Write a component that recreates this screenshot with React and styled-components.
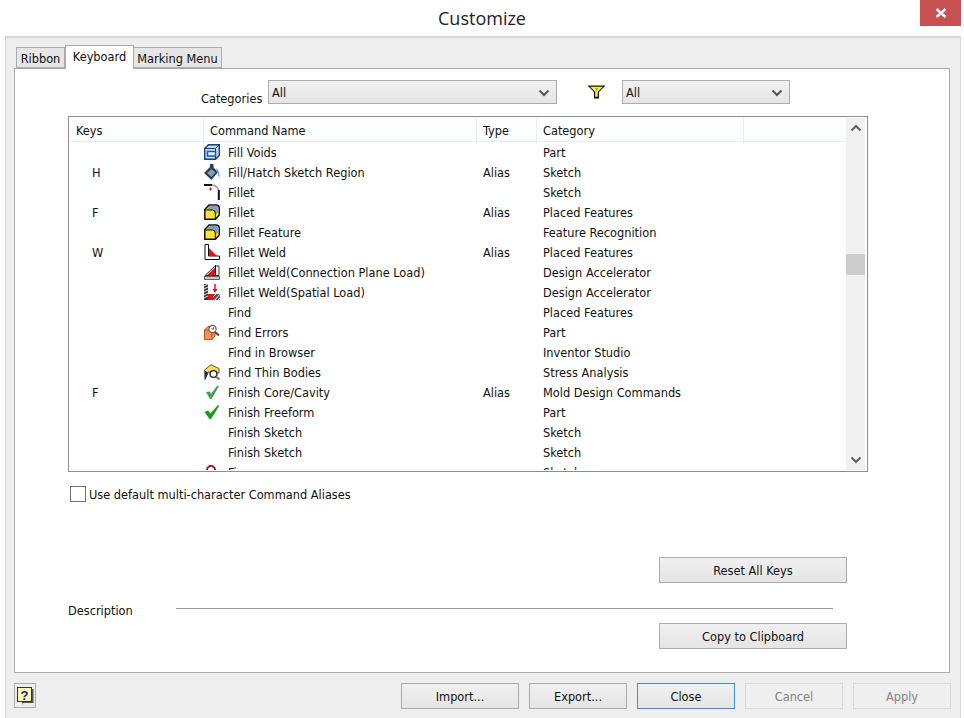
import React from 'react';
import styled, { createGlobalStyle } from 'styled-components';

const Global = createGlobalStyle`
  html, body { margin: 0; padding: 0; background: #fff; }
  body { font-family: "DejaVu Sans Condensed", "DejaVu Sans", sans-serif; font-stretch: condensed; font-size: 12.65px; color: #111; }
  * { box-sizing: border-box; }
`;

const Page = styled.div`
  width: 964px;
  height: 718px;
  overflow: hidden;
  display: flex;
  flex-direction: column;
`;

const TitleBar = styled.div`
  height: 36px;
  display: grid;
  grid-template-columns: 1fr auto 1fr;
  align-items: start;
`;

const Title = styled.div`
  grid-column: 2;
  font-family: "Open Sans", sans-serif;
  font-stretch: normal;
  font-size: 18px;
  line-height: 36px;
  color: #222;
`;

const CloseX = styled.div`
  grid-column: 3;
  justify-self: end;
  width: 41px;
  height: 26px;
  margin-right: 3px;
  background: #c75050;
  display: flex;
  align-items: center;
  justify-content: center;
`;

const Panel = styled.div`
  flex: 1;
  margin-left: 5px;
  width: 956px;
  background: #eeeeee;
  border: 2px solid #d6d6d6;
  border-width: 2px 1px 0 1px;
  padding: 6px 10px 0 8px;
`;

const Tabs = styled.div`
  display: flex;
  align-items: flex-end;
  height: 25px;
  margin-left: 2px;
  margin-bottom: -1px;
  position: relative;
  z-index: 1;
`;

const Tab = styled.div`
  height: ${p => (p.$active ? '24px' : '21px')};
  width: ${p => p.$w}px;
  margin-bottom: ${p => (p.$active ? '0' : '1px')};
  padding-top: 3px;
  text-align: center;
  line-height: 16px;
  white-space: nowrap;
  background: ${p => (p.$active ? '#fff' : '#e6e6e6')};
  border: 1px solid #acacac;
  border-bottom: ${p => (p.$active ? 'none' : '1px solid #acacac')};
  border-left: ${p => (p.$first || p.$active ? '1px solid #acacac' : 'none')};
  border-right: 1px solid #acacac;
`;

const Content = styled.div`
  width: 936px;
  height: 605px;
  background: #fff;
  border: 1px solid #acacac;
  padding: 11px 0 0 53px;
`;

const FilterRow = styled.div`
  display: flex;
  align-items: flex-start;
  height: 24px;
  padding-left: 133px;
`;

const FilterLabel = styled.span`
  line-height: 16px;
  margin-top: 11px;
  width: 67px;
`;

const SelectBox = styled.div`
  width: ${p => p.$w}px;
  height: 24px;
  padding: 1px 6px 0 3px;
  display: flex;
  align-items: center;
  justify-content: space-between;
  border: 1px solid #acacac;
  background: linear-gradient(#f0f0f0, #e5e5e5);
`;

const FunnelSlot = styled.div`
  width: 65px;
  height: 24px;
  padding: 5px 0 0 30px;
`;

const ListFrame = styled.div`
  margin-top: 12px;
  width: 800px;
  height: 356px;
  border: 1px solid #8c8c94;
  padding: 1px;
  display: flex;
  overflow: hidden;
`;

const ListBody = styled.div`
  width: 776px;
  overflow: hidden;
`;

const Columns = styled.div`
  display: grid;
  grid-template-columns: 134px 273px 60px 1fr;
`;

const Head = styled(Columns)`
  grid-template-columns: 134px 273px 60px 207px 1fr;
  height: 24px;
  background: #fcfdfe;
  border-bottom: 1px solid #e8f0f8;
`;

const HeadCell = styled.div`
  padding-left: 6px;
  line-height: 26px;
  border-right: 1px solid #e6edf5;
`;

const Row = styled(Columns)`
  height: 20px;
  line-height: 22px;
  white-space: nowrap;
`;

const KeyCell = styled.div`
  padding-left: 22px;
`;

const NameCell = styled.div`
  display: flex;
  align-items: flex-start;
  gap: 8px;
`;

const IconSlot = styled.span`
  width: 16px;
  height: 16px;
  margin-top: 2px;
  display: block;
  flex: none;
  & svg { display: block; }
`;

const TextCell = styled.div`
  padding-left: 6px;
`;

const ScrollBar = styled.div`
  width: 19px;
  background: #f0f0f0;
  display: flex;
  flex-direction: column;
  align-items: center;
`;

const ArrowBox = styled.div`
  height: 20px;
  width: 100%;
  display: flex;
  align-items: center;
  justify-content: center;
`;

const Thumb = styled.div`
  width: 100%;
  height: 21px;
  margin-top: 116px;
  background: #cdcdcd;
`;

const Grow = styled.div`
  flex: 1;
`;

const CheckRow = styled.label`
  display: flex;
  align-items: center;
  gap: 3px;
  margin: 14px 0 0 2px;
  height: 16px;
`;

const CheckBox = styled.span`
  width: 16px;
  height: 16px;
  background: #fff;
  border: 1px solid #707070;
`;

const Button = styled.div`
  width: ${p => p.$w || 98}px;
  height: 26px;
  text-align: center;
  line-height: 25px;
  color: ${p => (p.$off ? '#838383' : '#111')};
  background: ${p => (p.$off ? '#efefef' : 'linear-gradient(#f0f0f0, #e5e5e5)')};
  border: 1px solid ${p => (p.$off ? '#d9d9d9' : p.$focus ? '#3c8fe0' : '#acacac')};
`;

const SideButton = styled(Button)`
  margin: ${p => p.$top}px 0 0 591px;
`;

const DescRow = styled.div`
  display: flex;
  margin-top: 19px;
  height: 21px;
`;

const DescLabel = styled.span`
  width: 108px;
  margin-top: 1px;
  line-height: 16px;
`;

const DescLine = styled.div`
  width: 657px;
  height: 1px;
  background: #9a9a9a;
  margin-top: 6px;
`;

const Footer = styled.div`
  display: flex;
  width: 937px;
  margin-top: 10px;
  gap: 10px;
  align-items: flex-start;
`;

const HelpButton = styled.div`
  width: 22px;
  height: 25px;
  margin-right: 355px;
  border: 1px solid #acacac;
  padding: 3px 0 0 2px;
`;

const Chevron = ({ up, dark }) => (
  <svg width="12" height="8" viewBox="0 0 12 8">
    <path d={up ? 'M1.5 6.5 L6 2 L10.5 6.5' : 'M1.5 1.5 L6 6 L10.5 1.5'} fill="none" stroke={dark ? '#5f5f5f' : '#555'} strokeWidth="2" />
  </svg>
);

const Svg = ({ children }) => <svg width="16" height="16" viewBox="0 0 16 16">{children}</svg>;

const icons = {
  voids: (
    <Svg>
      <path d="M.7 4.5 L4.5 .7 H15.3 V11.5 L11.5 15.3 H.7 Z" fill="#c6d9ee" stroke="#173f78" strokeWidth="1.4" />
      <path d="M.7 4.5 H11.5 V15.3 M11.5 4.5 L15.3 .7" fill="none" stroke="#173f78" />
      <rect x="3.5" y="7.5" width="8" height="4.5" fill="#e9f1fa" stroke="#1f5aa8" strokeWidth="1.5" />
    </Svg>
  ),
  hatch: (
    <Svg>
      <path d="M0 9 L7.5 1.5 L14 8 L7.5 16 Z" fill="#1f3f6b" />
      <path d="M3 9 L7.5 5 L11.5 8.5 L7.5 13 Z" fill="#8e9ba6" />
      <path d="M6 0 H9.5 V5 H6 Z" fill="#3c3c3c" />
      <path d="M12 4 Q16 6.5 15.5 14 L13 8.5 Z" fill="#6aa6dc" />
    </Svg>
  ),
  arc: (
    <Svg>
      <path d="M0 1 H8" stroke="#111" strokeWidth="2" />
      <path d="M8 1 Q14 2 14.8 7" fill="none" stroke="#9a9a9a" strokeWidth="1.5" />
      <path d="M14.8 6 V16" stroke="#111" strokeWidth="2" />
      <path d="M5 5 H8 M6.5 3.5 V6.5" stroke="#e01010" strokeWidth="1" />
    </Svg>
  ),
  cube: (
    <Svg>
      <path d="M.8 5.5 L5 1 H12 Q15.3 1 15.3 4 V11 L11.5 15.2 H.8 Z" fill="#ffe23a" stroke="#111" strokeWidth="1.5" />
      <path d="M5.5 1.8 H12 Q14.6 2 14.6 5 V8 L11.5 11 V8 Q11 6 8.5 6 H2.5 Z" fill="#7f9fc4" />
      <path d="M.8 6 H8.5 Q11.3 6.2 11.3 9 V15" fill="none" stroke="#111" strokeWidth="1" />
    </Svg>
  ),
  weld: (
    <Svg>
      <path d="M1 0.5 H4.5 V12 H15.5 V15.5 H1 Z" fill="#fff" stroke="#111" />
      <path d="M5 4 L13 12 H5 Z" fill="#e01414" />
    </Svg>
  ),
  plane: (
    <Svg>
      <path d="M1 11.5 L11 2 H15 V11.5 Z" fill="#fff" stroke="#333" />
      <path d="M2.5 11.5 L11 3.5 V11.5 Z" fill="#e01414" />
      <path d="M11.5 1 V12" stroke="#111" />
      <rect x="0.5" y="12.5" width="15" height="3" fill="#c8c8c8" stroke="#444" strokeWidth=".8" />
    </Svg>
  ),
  spatial: (
    <Svg>
      <rect x="0" y="0" width="4" height="16" fill="#333" />
      <path d="M0 2 L4 0 M0 5 L4 3 M0 8 L4 6 M0 11 L4 9 M0 14 L4 12" stroke="#eee" />
      <rect x="4" y="10" width="5" height="6" fill="#e01414" />
      <rect x="9" y="10" width="7" height="6" fill="#555" />
      <path d="M9 13 L12 10 M11 16 L16 10 M14 16 L16 14" stroke="#eee" />
      <path d="M11 0 V6" stroke="#e01414" strokeWidth="1.5" />
      <path d="M8.5 5 H13.5 L11 9 Z" fill="#e01414" />
    </Svg>
  ),
  errors: (
    <Svg>
      <path d="M.5 6 L4 2.5 H11 V12 L8 15.5 H.5 Z" fill="#f0955a" stroke="#b6561d" />
      <path d="M.5 6 H8 V15.5 M8 6 L11 2.5" fill="none" stroke="#b6561d" />
      <circle cx="8.5" cy="5" r="3.6" fill="#fff" stroke="#666" strokeWidth="1.2" />
      <path d="M7.5 4 L9 5.5 L10 3" fill="none" stroke="#d92020" />
      <path d="M11 8 L15 11.5" stroke="#444" strokeWidth="2" />
    </Svg>
  ),
  thin: (
    <Svg>
      <path d="M.5 6 L7 .8 L15 4.5 V9 L4 8 L1 15.5 Z" fill="#ffe04a" stroke="#555" />
      <path d="M.8 6.5 L4.5 9 L1 15.8 Z" fill="#1f2f58" />
      <circle cx="9.5" cy="10" r="3.4" fill="#fff" stroke="#222" strokeWidth="1.4" />
      <path d="M12 12.5 L15.5 15.5" stroke="#777" strokeWidth="2" />
    </Svg>
  ),
  checkDim: (
    <Svg>
      <path d="M2 8 L6 7.5 L7 10 L13 2 L15 2 L7.5 15 H6 Z" fill="#3f9a4a" />
      <path d="M6.5 8 L7.5 12 L6.5 14 Z" fill="#8fb8a0" />
    </Svg>
  ),
  check: (
    <Svg>
      <path d="M.5 8 L4 6.5 L6.5 9.5 L13.5 1.5 L15.5 1.5 L7 15 H5.5 Z" fill="#12a012" />
    </Svg>
  ),
  fix: (
    <Svg>
      <path d="M2 6 A5 5 0 0 1 12 6 V11 H10 V6 A3 3 0 0 0 4 6 V11 H2 Z" fill="#a81818" />
    </Svg>
  ),
};

const rows = [
  ['', 'voids', 'Fill Voids', '', 'Part'],
  ['H', 'hatch', 'Fill/Hatch Sketch Region', 'Alias', 'Sketch'],
  ['', 'arc', 'Fillet', '', 'Sketch'],
  ['F', 'cube', 'Fillet', 'Alias', 'Placed Features'],
  ['', 'cube', 'Fillet Feature', '', 'Feature Recognition'],
  ['W', 'weld', 'Fillet Weld', 'Alias', 'Placed Features'],
  ['', 'plane', 'Fillet Weld(Connection Plane Load)', '', 'Design Accelerator'],
  ['', 'spatial', 'Fillet Weld(Spatial Load)', '', 'Design Accelerator'],
  ['', null, 'Find', '', 'Placed Features'],
  ['', 'errors', 'Find Errors', '', 'Part'],
  ['', null, 'Find in Browser', '', 'Inventor Studio'],
  ['', 'thin', 'Find Thin Bodies', '', 'Stress Analysis'],
  ['F', 'checkDim', 'Finish Core/Cavity', 'Alias', 'Mold Design Commands'],
  ['', 'check', 'Finish Freeform', '', 'Part'],
  ['', null, 'Finish Sketch', '', 'Sketch'],
  ['', null, 'Finish Sketch', '', 'Sketch'],
  ['', 'fix', 'Fix', '', 'Sketch'],
];

export default function App() {
  return (
    <Page>
      <Global />
      <TitleBar>
        <Title>Customize</Title>
        <CloseX>
          <svg width="12" height="10" viewBox="0 0 12 10">
            <path d="M1.5 1 L10.5 9 M10.5 1 L1.5 9" stroke="#fff" strokeWidth="2.4" />
          </svg>
        </CloseX>
      </TitleBar>
      <Panel>
        <Tabs>
          <Tab $first $w={49}>Ribbon</Tab>
          <Tab $active $w={69}>Keyboard</Tab>
          <Tab $w={88}>Marking Menu</Tab>
        </Tabs>
        <Content>
          <FilterRow>
            <FilterLabel>Categories</FilterLabel>
            <SelectBox $w={289}>All<Chevron /></SelectBox>
            <FunnelSlot>
              <svg width="19" height="14" viewBox="0 0 19 14">
                <path d="M.5 .5 H18.5 L12 7 V13.5 H7 V7 Z" fill="#111" />
                <path d="M3 1.7 H16 L10.8 6.8 V11.8 H8.2 V6.8 Z" fill="#f6f31f" />
                <path d="M8 3 L11 3 L9.5 6 Z" fill="#8f8fd0" />
              </svg>
            </FunnelSlot>
            <SelectBox $w={168}>All<Chevron /></SelectBox>
          </FilterRow>
          <ListFrame>
            <ListBody>
              <Head>
                <HeadCell>Keys</HeadCell>
                <HeadCell>Command Name</HeadCell>
                <HeadCell>Type</HeadCell>
                <HeadCell>Category</HeadCell>
                <div />
              </Head>
              {rows.map((r, i) => (
                <Row key={i}>
                  <KeyCell>{r[0]}</KeyCell>
                  <NameCell>
                    <IconSlot>{r[1] && icons[r[1]]}</IconSlot>
                    {r[2]}
                  </NameCell>
                  <TextCell>{r[3]}</TextCell>
                  <TextCell>{r[4]}</TextCell>
                </Row>
              ))}
            </ListBody>
            <ScrollBar>
              <ArrowBox><Chevron up dark /></ArrowBox>
              <Thumb />
              <Grow />
              <ArrowBox><Chevron dark /></ArrowBox>
            </ScrollBar>
          </ListFrame>
          <CheckRow>
            <CheckBox />
            Use default multi-character Command Aliases
          </CheckRow>
          <SideButton $w={188} $top={55}>Reset All Keys</SideButton>
          <DescRow>
            <DescLabel>Description</DescLabel>
            <DescLine />
          </DescRow>
          <SideButton $w={188} $top={0}>Copy to Clipboard</SideButton>
        </Content>
        <Footer>
          <HelpButton>
            <svg width="17" height="18" viewBox="0 0 17 18">
              <rect x="0.5" y="0.5" width="14" height="14" fill="#fdfbb0" stroke="#333" />
              <path d="M15 2 H16.5 V16 H6 L5 18 V15 H15 Z" fill="#555" />
              <text x="7.5" y="12.5" textAnchor="middle" fontFamily="Liberation Sans, sans-serif" fontWeight="700" fontSize="13" fill="#23238e">?</text>
            </svg>
          </HelpButton>
          <Button $w={118}>Import...</Button>
          <Button>Export...</Button>
          <Button $focus>Close</Button>
          <Button $off>Cancel</Button>
          <Button $off>Apply</Button>
        </Footer>
      </Panel>
    </Page>
  );
}
